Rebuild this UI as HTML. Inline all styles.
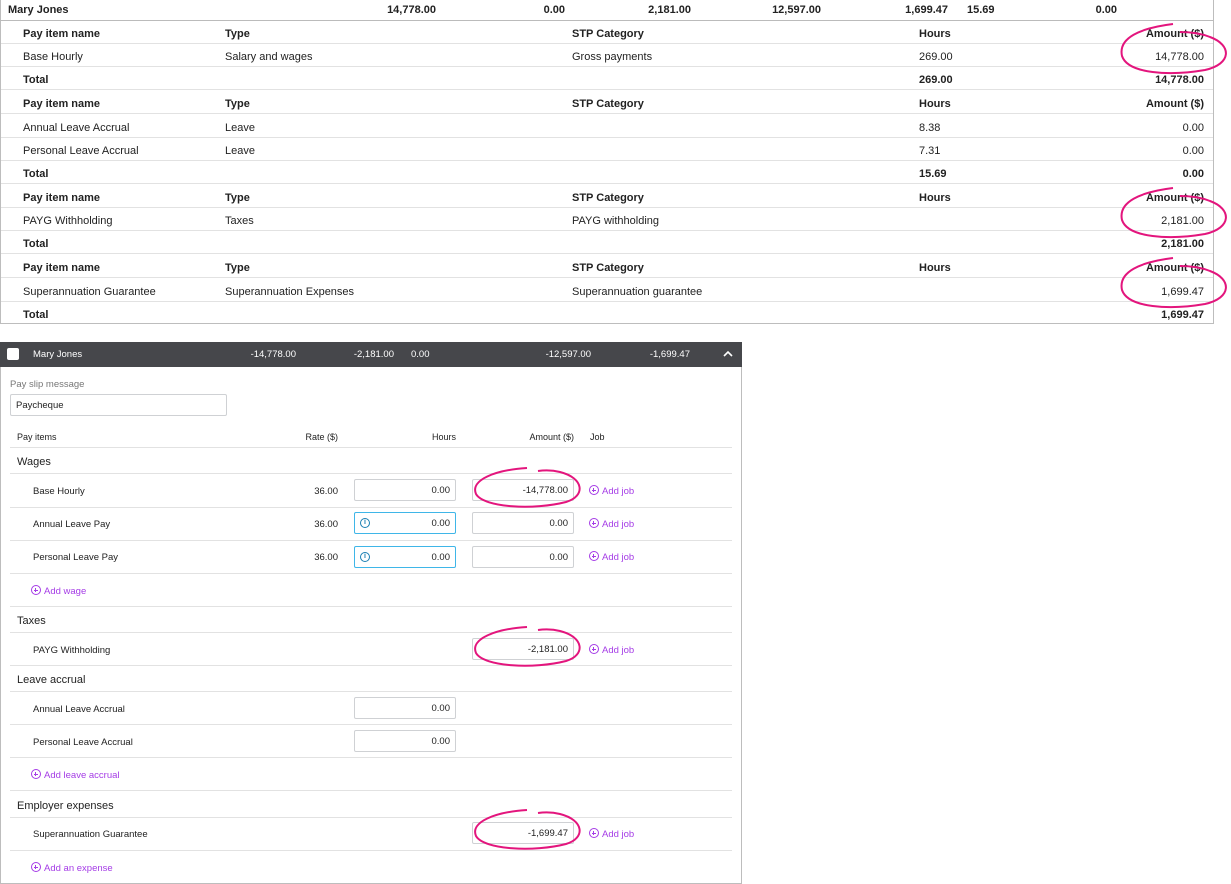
<!DOCTYPE html><html><head><meta charset="utf-8"><style>
*{margin:0;padding:0;box-sizing:border-box}
body{width:1231px;height:884px;position:relative;background:#fff;font-family:"Liberation Sans",sans-serif;color:#222;overflow:hidden}
.t{position:absolute;white-space:nowrap;line-height:14px;transform:translateY(-6px)}
.a{font-size:11px}.b{font-weight:bold}
.s{font-size:9.5px}
.l{position:absolute;height:1px;background:#e2e2e2}
.in{position:absolute;height:22px;border:1px solid #cfd1d4;border-radius:2px;background:#fff;font-size:9.5px;text-align:right;padding-right:5px;line-height:22px}
.bl{border-color:#3fb6e8}
.p{color:#a53ce6}
.ic{display:inline-block;width:10px;height:10px;border:1.2px solid #a53ce6;border-radius:50%;position:relative;vertical-align:-1px;margin-right:3px}
.ic:before{content:"";position:absolute;left:1.5px;top:3.6px;width:4.6px;height:1.2px;background:#a53ce6}
.ic:after{content:"";position:absolute;left:3.3px;top:1.8px;width:1.2px;height:4.6px;background:#a53ce6}
.inf{position:absolute;left:5px;top:5px;width:10px;height:10px;border:1.2px solid #1a7fb3;border-radius:50%;font-size:7px;line-height:8px;text-align:center;color:#1a7fb3;font-weight:bold}
</style></head><body>
<div style="position:absolute;left:0;top:0;width:1214px;height:324px;border:1px solid #bdbdbd;border-top:none"></div>
<div class="l" style="left:0;top:20px;width:1214px;background:#bbb"></div>
<div class="t a b" style="left:8px;top:9px">Mary Jones</div>
<div class="t a b" style="right:795px;top:9px">14,778.00</div>
<div class="t a b" style="right:666px;top:9px">0.00</div>
<div class="t a b" style="right:540px;top:9px">2,181.00</div>
<div class="t a b" style="right:410px;top:9px">12,597.00</div>
<div class="t a b" style="right:283px;top:9px">1,699.47</div>
<div class="t a b" style="left:967px;top:9px">15.69</div>
<div class="t a b" style="right:114px;top:9px">0.00</div>

<div id="rows"></div>

<div style="position:absolute;left:0;top:342px;width:742px;height:542px;border:1px solid #bdbdbd"></div>
<div style="position:absolute;left:0;top:342px;width:742px;height:25px;background:#46474b"></div>
<div style="position:absolute;left:7px;top:348px;width:12px;height:12px;background:#fff;border-radius:2px"></div>
<div class="t s" style="left:33px;top:354px;color:#fff">Mary Jones</div>
<div class="t s" style="right:935px;top:354px;color:#fff">-14,778.00</div>
<div class="t s" style="right:837px;top:354px;color:#fff">-2,181.00</div>
<div class="t s" style="left:411px;top:354px;color:#fff">0.00</div>
<div class="t s" style="right:640px;top:354px;color:#fff">-12,597.00</div>
<div class="t s" style="right:541px;top:354px;color:#fff">-1,699.47</div>
<svg style="position:absolute;left:723px;top:350px" width="10" height="8"><path d="M1 6 L5 2 L9 6" stroke="#fff" stroke-width="1.6" fill="none"/></svg>

<div class="t s" style="left:10px;top:384px;color:#777">Pay slip message</div>
<div class="in" style="left:10px;top:394px;width:217px;text-align:left;padding-left:5px">Paycheque</div>
<div class="t s" style="left:17px;top:436px;font-size:9px">Pay items</div>
<div class="t s" style="right:893px;top:436px;font-size:9px">Rate ($)</div>
<div class="t s" style="right:775px;top:436px;font-size:9px">Hours</div>
<div class="t s" style="right:657px;top:436px;font-size:9px">Amount ($)</div>
<div class="t s" style="left:590px;top:436px;font-size:9px">Job</div>
<div class="l" style="left:10px;top:447px;width:722px"></div>
<div class="t" style="left:17px;top:461px;font-size:11px">Wages</div>
<div class="l" style="left:10px;top:473px;width:722px"></div>

<div class="t s" style="left:33px;top:491px">Base Hourly</div>
<div class="t s" style="right:893px;top:491px">36.00</div>
<div class="in" style="left:354px;top:479px;width:102px">0.00</div>
<div class="in" style="left:472px;top:479px;width:102px">-14,778.00</div>
<div class="t s p" style="left:589px;top:491px"><span class="ic"></span>Add job</div>
<div class="l" style="left:10px;top:507px;width:722px"></div>

<div class="t s" style="left:33px;top:524px">Annual Leave Pay</div>
<div class="t s" style="right:893px;top:524px">36.00</div>
<div class="in bl" style="left:354px;top:512px;width:102px"><span class="inf">i</span>0.00</div>
<div class="in" style="left:472px;top:512px;width:102px">0.00</div>
<div class="t s p" style="left:589px;top:524px"><span class="ic"></span>Add job</div>
<div class="l" style="left:10px;top:540px;width:722px"></div>

<div class="t s" style="left:33px;top:557px">Personal Leave Pay</div>
<div class="t s" style="right:893px;top:557px">36.00</div>
<div class="in bl" style="left:354px;top:546px;width:102px"><span class="inf">i</span>0.00</div>
<div class="in" style="left:472px;top:546px;width:102px">0.00</div>
<div class="t s p" style="left:589px;top:557px"><span class="ic"></span>Add job</div>
<div class="l" style="left:10px;top:573px;width:722px"></div>
<div class="t s p" style="left:31px;top:591px"><span class="ic"></span>Add wage</div>
<div class="l" style="left:10px;top:606px;width:722px"></div>

<div class="t" style="left:17px;top:620px;font-size:11px">Taxes</div>
<div class="l" style="left:10px;top:632px;width:722px"></div>
<div class="t s" style="left:33px;top:650px">PAYG Withholding</div>
<div class="in" style="left:472px;top:638px;width:102px">-2,181.00</div>
<div class="t s p" style="left:589px;top:650px"><span class="ic"></span>Add job</div>
<div class="l" style="left:10px;top:665px;width:722px"></div>

<div class="t" style="left:17px;top:679px;font-size:11px">Leave accrual</div>
<div class="l" style="left:10px;top:691px;width:722px"></div>
<div class="t s" style="left:33px;top:709px">Annual Leave Accrual</div>
<div class="in" style="left:354px;top:697px;width:102px">0.00</div>
<div class="l" style="left:10px;top:724px;width:722px"></div>
<div class="t s" style="left:33px;top:742px">Personal Leave Accrual</div>
<div class="in" style="left:354px;top:730px;width:102px">0.00</div>
<div class="l" style="left:10px;top:757px;width:722px"></div>
<div class="t s p" style="left:31px;top:775px"><span class="ic"></span>Add leave accrual</div>
<div class="l" style="left:10px;top:790px;width:722px"></div>

<div class="t" style="left:17px;top:805px;font-size:11px">Employer expenses</div>
<div class="l" style="left:10px;top:817px;width:722px"></div>
<div class="t s" style="left:33px;top:834px">Superannuation Guarantee</div>
<div class="in" style="left:472px;top:822px;width:102px">-1,699.47</div>
<div class="t s p" style="left:589px;top:834px"><span class="ic"></span>Add job</div>
<div class="l" style="left:10px;top:850px;width:722px"></div>
<div class="t s p" style="left:31px;top:868px"><span class="ic"></span>Add an expense</div>

<svg style="position:absolute;left:0;top:0" width="1231" height="884" fill="none" stroke="#e3157d" stroke-width="2">
<path d="M1173 24 C1140 28 1118 38 1122 56 C1128 74 1170 76 1205 70 C1232 64 1232 45 1210 37 C1200 33 1190 32 1180 32"/>
<path d="M1173 188 C1140 192 1118 202 1122 220 C1128 238 1170 240 1205 234 C1232 228 1232 209 1210 201 C1200 197 1190 196 1180 196"/>
<path d="M1173 258 C1140 262 1118 272 1122 290 C1128 308 1170 310 1205 304 C1232 298 1232 279 1210 271 C1200 267 1190 266 1180 266"/>
<path d="M527 468 C495 470 470 480 476 494 C484 508 535 510 566 502 C586 496 584 478 560 472 C552 470 545 470 538 471"/>
<path d="M527 627 C495 629 470 639 476 653 C484 667 535 669 566 661 C586 655 584 637 560 631 C552 629 545 629 538 630"/>
<path d="M527 810 C495 812 470 822 476 836 C484 850 535 852 566 844 C586 838 584 820 560 814 C552 812 545 812 538 813"/>
</svg>

<script>
var R=[
["h",33],["Base Hourly|Salary and wages|Gross payments|269.00|14,778.00",56],["t",79,"269.00","14,778.00"],
["h",103],["Annual Leave Accrual|Leave||8.38|0.00",127],["Personal Leave Accrual|Leave||7.31|0.00",150],["t",173,"15.69","0.00"],
["h",197],["PAYG Withholding|Taxes|PAYG withholding||2,181.00",220],["t",243,"","2,181.00"],
["h",267],["Superannuation Guarantee|Superannuation Expenses|Superannuation guarantee||1,699.47",291],["t",314,"","1,699.47"]];
var h="";
function row(c,y,b){var k=b?" b":"";
h+='<div class="t a'+k+'" style="left:23px;top:'+y+'px">'+c[0]+'</div>';
h+='<div class="t a'+k+'" style="left:225px;top:'+y+'px">'+c[1]+'</div>';
h+='<div class="t a'+k+'" style="left:572px;top:'+y+'px">'+c[2]+'</div>';
h+='<div class="t a'+k+'" style="left:919px;top:'+y+'px">'+c[3]+'</div>';
h+='<div class="t a'+k+'" style="right:27px;top:'+y+'px">'+c[4]+'</div>';
if(y<300)h+='<div class="l" style="left:1px;top:'+(y+10)+'px;width:1212px"></div>';}
R.forEach(function(r){
if(r[0]=="h")row(["Pay item name","Type","STP Category","Hours","Amount ($)"],r[1],1);
else if(r[0]=="t")row(["Total","","",r[2],r[3]],r[1],1);
else row(r[0].split("|"),r[1],0);});
document.getElementById("rows").outerHTML=h;
</script>
</body></html>
